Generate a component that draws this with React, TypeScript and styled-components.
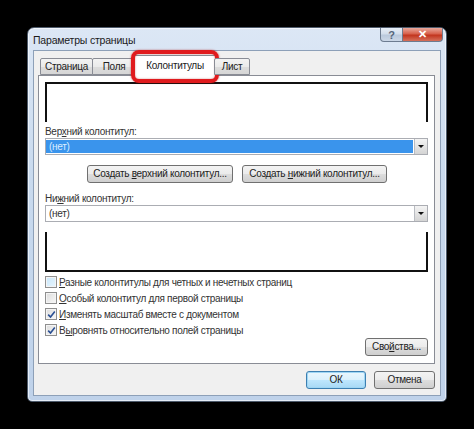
import React from "react";
import styled, { createGlobalStyle, css } from "styled-components";

const GlobalStyle = createGlobalStyle`
    html, body {
        margin: 0;
        padding: 0;
        background: #000;
    }
    body {
        font-family: "Liberation Sans", Arial, sans-serif;
        font-size: 10px;
        letter-spacing: -0.3px;
        color: #1e1e1e;
    }
`

const Page = styled.div`
    width: 474px;
    height: 429px;
    padding: 27px 0 0 27px;
    box-sizing: border-box;
`

const Window = styled.div`
    width: 420px;
    height: 375px;
    box-sizing: border-box;
    border: 1px solid #4d5a6b;
    border-radius: 7px 7px 5px 5px;
    background: linear-gradient(180deg, #dce7f5 0%, #c9daee 40%, #bfd2ea 100%);
    padding: 0 5px 5px 5px;
    display: flex;
    flex-direction: column;
    box-shadow: inset 0 0 0 1px rgba(255, 255, 255, 0.6);
`

const TitleBar = styled.div`
    height: 22px;
    display: flex;
    align-items: flex-start;
    justify-content: space-between;
`

const Title = styled.span`
    font-size: 10.5px;
    letter-spacing: -0.2px;
    line-height: 22px;
    color: #1b1b1b;
    padding-top: 1px;
`

const CaptionButtons = styled.div`
    display: flex;
    margin-right: -2px;
`

const CaptionButton = styled.div<{ $close?: boolean }>`
    height: 14px;
    width: ${p => (p.$close ? 40 : 23)}px;
    box-sizing: border-box;
    border: 1px solid #6d7c90;
    border-top: none;
    display: flex;
    align-items: center;
    justify-content: center;
    font-size: 11px;
    font-weight: bold;
    ${p => p.$close
        ? css`
            border-radius: 0 0 4px 0;
            border-left: none;
            background: linear-gradient(180deg, #e9a99c 0%, #d7604b 45%, #c2351e 55%, #d5705b 100%);
            color: #fff;
        `
        : css`
            border-radius: 0 0 0 4px;
            background: linear-gradient(180deg, #e7eef7 0%, #d3deeb 45%, #bac9dc 55%, #ccd8e7 100%);
            color: #56657a;
        `}
`

const Client = styled.div`
    flex: 1;
    background: #f0f0f0;
    border: 1px solid #8da0b8;
    padding: 4px 5px 0 4px;
    display: flex;
    flex-direction: column;
`

const Tabs = styled.div`
    display: flex;
    align-items: flex-end;
    height: 20px;
    padding-left: 2px;
    position: relative;
    z-index: 1;
`

const Tab = styled.div<{ $active?: boolean; $w: number }>`
    position: relative;
    width: ${p => p.$w}px;
    box-sizing: border-box;
    border: 1px solid #898c95;
    border-radius: 2px 2px 0 0;
    margin-right: -1px;
    display: flex;
    align-items: center;
    justify-content: center;
    color: #222;
    ${p => p.$active
        ? css`
            height: 21px;
            margin-bottom: -1px;
            margin-left: -2px;
            margin-right: -3px;
            background: #fff;
            border-bottom: none;
            padding-bottom: 2px;
        `
        : css`
            height: 17px;
            background: linear-gradient(180deg, #f3f3f3 0%, #ebebeb 50%, #dddddd 51%, #d6d6d6 100%);
        `}
`

const Highlight = styled.div`
    position: absolute;
    left: -3px;
    right: -3px;
    top: -6px;
    bottom: -7px;
    border: 4px solid #e01b1e;
    border-radius: 8px;
    box-shadow: 0 0 2px rgba(160, 0, 0, 0.6), inset 0 0 2px rgba(160, 0, 0, 0.5);
    pointer-events: none;
`

const Panel = styled.div`
    height: 289px;
    box-sizing: border-box;
    background: #fff;
    border: 1px solid #898c95;
    padding: 6px 6px 0 6px;
    display: flex;
    flex-direction: column;
`

const Preview = styled.div<{ $footer?: boolean }>`
    height: 40px;
    box-sizing: border-box;
    border: 2px solid #111;
    ${p => (p.$footer ? "border-top: none; margin-top: 10px;" : "border-bottom: none;")}
`

const Label = styled.div<{ $top: number }>`
    line-height: 13px;
    margin-top: ${p => p.$top}px;
    color: #333;
`

const Select = styled.div`
    height: 17px;
    box-sizing: border-box;
    border: 1px solid #abadb3;
    display: flex;
    align-items: stretch;
    background: #fff;
`

const SelectValue = styled.div<{ $selected?: boolean }>`
    flex: 1;
    display: flex;
    align-items: center;
    padding-left: 3px;
    margin: 1px 1px 1px 0;
    ${p => p.$selected
        ? css`
            background: #3a94ec;
            color: #d9ecff;
        `
        : css`
            color: #333;
        `}
`

const DropButton = styled.div`
    width: 13px;
    box-sizing: border-box;
    border-left: 1px solid #b9bcc2;
    background: linear-gradient(180deg, #f4f4f4 0%, #e4e4e4 50%, #d4d4d4 100%);
    display: flex;
    align-items: center;
    justify-content: center;
`

const Arrow = styled.div`
    width: 0;
    height: 0;
    border-left: 3px solid transparent;
    border-right: 3px solid transparent;
    border-top: 3px solid #111;
`

const CenterRow = styled.div`
    display: flex;
    justify-content: center;
    gap: 9px;
    margin-top: 10px;
    padding-left: 1px;
`

const Button = styled.div<{ $w: number; $default?: boolean }>`
    width: ${p => p.$w}px;
    height: 18px;
    box-sizing: border-box;
    border: 1px solid #707070;
    border-radius: 3px;
    background: linear-gradient(180deg, #f3f3f3 0%, #ebebeb 50%, #dddddd 51%, #cfcfcf 100%);
    text-align: center;
    line-height: 16px;
    white-space: nowrap;
    color: #222;
    ${p => p.$default && css`
        border-color: #3c7fb1;
        box-shadow: inset 0 0 0 1px #9fd6f4;
        background: linear-gradient(180deg, #eaf6fd 0%, #d9f0fc 50%, #bee6fd 51%, #a7d9f5 100%);
    `}
`

const Checks = styled.div`
    margin-top: 2px;
    display: flex;
    flex-direction: column;
`

const CheckRow = styled.div`
    height: 16px;
    display: flex;
    align-items: center;
    gap: 2px;
    color: #333;
`

const Box = styled.div<{ $hover?: boolean }>`
    width: 12px;
    height: 12px;
    box-sizing: border-box;
    border: 1px solid #8f8f8f;
    background: ${p => (p.$hover
        ? "linear-gradient(135deg, #c9e7fb 0%, #e8f5fd 100%)"
        : "linear-gradient(135deg, #dcdcdc 0%, #f8f8f8 100%)")};
    box-shadow: inset 0 0 0 1px #f4f4f4;
    display: flex;
    align-items: center;
    justify-content: center;
`

const RightRow = styled.div<{ $top: number }>`
    display: flex;
    justify-content: flex-end;
    gap: 8px;
    margin-top: ${p => p.$top}px;
`

const U = styled.span`
    text-decoration: underline;
`

const Check = () => (
    <svg width="9" height="9" viewBox="0 0 9 9">
        <path d="M1.2 4.6 L3.5 7 L7.8 1.4" fill="none" stroke="#2a4f93" strokeWidth="1.6" />
    </svg>
)

const CheckItem = ({ checked, hover, children }: { checked?: boolean; hover?: boolean; children: React.ReactNode }) => (
    <CheckRow>
        <Box $hover={hover}>{checked && <Check />}</Box>
        <span>{children}</span>
    </CheckRow>
)

export default function App() {
    return (
        <>
            <GlobalStyle />
            <Page>
                <Window>
                    <TitleBar>
                        <Title>Параметры страницы</Title>
                        <CaptionButtons>
                            <CaptionButton>?</CaptionButton>
                            <CaptionButton $close>✕</CaptionButton>
                        </CaptionButtons>
                    </TitleBar>
                    <Client>
                        <Tabs>
                            <Tab $w={53}>Страница</Tab>
                            <Tab $w={44}>Поля</Tab>
                            <Tab $w={84} $active>
                                Колонтитулы
                                <Highlight />
                            </Tab>
                            <Tab $w={36}>Лист</Tab>
                        </Tabs>
                        <Panel>
                            <Preview />
                            <Label $top={3}>Вер<U>х</U>ний колонтитул:</Label>
                            <Select>
                                <SelectValue $selected>(нет)</SelectValue>
                                <DropButton><Arrow /></DropButton>
                            </Select>
                            <CenterRow>
                                <Button $w={146}>Создать <U>в</U>ерхний колонтитул...</Button>
                                <Button $w={145}>Создать <U>н</U>ижний колонтитул...</Button>
                            </CenterRow>
                            <Label $top={9}>Ни<U>ж</U>ний колонтитул:</Label>
                            <Select>
                                <SelectValue>(нет)</SelectValue>
                                <DropButton><Arrow /></DropButton>
                            </Select>
                            <Preview $footer />
                            <Checks>
                                <CheckItem hover><U>Р</U>азные колонтитулы для четных и нечетных страниц</CheckItem>
                                <CheckItem><U>О</U>собый колонтитул для первой страницы</CheckItem>
                                <CheckItem checked><U>И</U>зменять масштаб вместе с документом</CheckItem>
                                <CheckItem checked>В<U>ы</U>ровнять относительно полей страницы</CheckItem>
                            </Checks>
                            <RightRow $top={0}>
                                <Button $w={63}>Сво<U>й</U>ства...</Button>
                            </RightRow>
                        </Panel>
                        <RightRow $top={7}>
                            <Button $w={60} $default>ОК</Button>
                            <Button $w={61}>Отмена</Button>
                        </RightRow>
                    </Client>
                </Window>
            </Page>
        </>
    );
}
